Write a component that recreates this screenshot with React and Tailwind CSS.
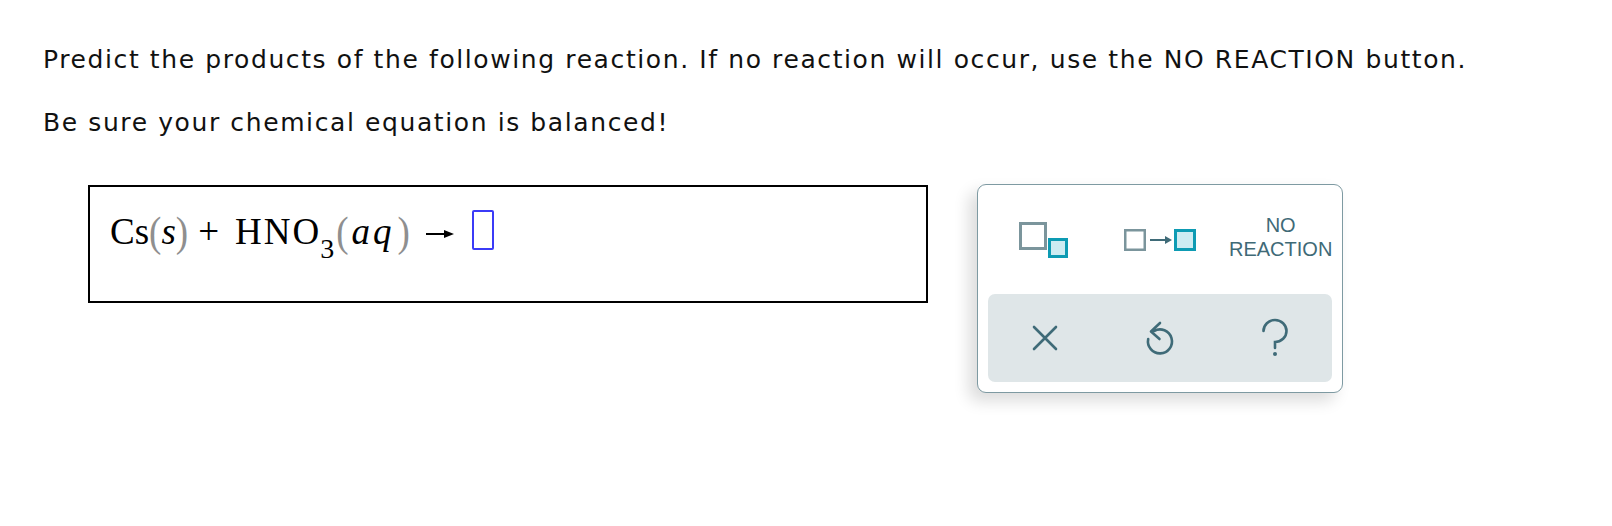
export default function App() {
  const iconColor = "#3f6b78";
  const paren = "inline-block scale-y-[1.15] text-[#8f8f8f]";
  return (
    <div className="min-h-[526px] bg-white pl-[43px] pt-[42px] font-['DejaVu_Sans',sans-serif] text-[25px] leading-[36px] tracking-[1.6px] text-[#111]">
      <p>Predict the products of the following reaction. If no reaction will occur, use the NO REACTION button.</p>
      <p className="mt-[27px]">Be sure your chemical equation is balanced!</p>
      <div className="mt-[44px] ml-[45px] flex items-start tracking-normal">
        <div className="h-[118px] w-[840px] border-2 border-black pl-[20px] pt-[23px]">
          <div className="flex items-start font-['Liberation_Serif',serif] text-[37px] text-black">
            <span className="mt-[4px] whitespace-nowrap leading-[36px]">
              Cs<span className={paren}>(</span><i>s</i><span className={paren}>)</span>
              <span className="ml-[10px] mr-[16px]">+</span>
              H<span className="ml-[2px]">N</span><span className="ml-[2px]">O</span><span className="ml-[1px] align-[-14px] text-[28px]">3</span><span className={`ml-[2px] ${paren}`}>(</span><i className="ml-[3px] tracking-[3px]">aq</i><span className={`ml-[3px] ${paren}`}>)</span>
            </span>
            <svg className="ml-[16px] mt-[19px]" width="28" height="10" viewBox="0 0 28 10">
              <line x1="0" y1="5" x2="20" y2="5" stroke="#000" strokeWidth="2" />
              <polygon points="18,1 28,5 18,9" fill="#000" />
            </svg>
            <div className="ml-[18px] h-[40px] w-[22px] rounded-[2px] border-2 border-[#3b3bf7]" />
          </div>
        </div>
        <div className="-mt-px ml-[49px] flex h-[209px] w-[366px] flex-col rounded-[9px] border-[1.5px] border-[#7e9aa2] bg-white px-[10px] shadow-[-8px_8px_16px_rgba(0,0,0,0.14)]">
          <div className="grid h-[109px] grid-cols-3 items-center">
            <div className="flex justify-center">
              <svg width="52" height="38" viewBox="0 0 52 38" className="-ml-[3px]">
                <rect x="2.5" y="2.5" width="25" height="25" fill="none" stroke="#7b959c" strokeWidth="3" />
                <rect x="31.5" y="18.5" width="17" height="17" fill="#cdecf2" stroke="#0d9bb3" strokeWidth="3" />
              </svg>
            </div>
            <div className="flex justify-center">
              <svg width="74" height="24" viewBox="0 0 74 24">
                <rect x="2.25" y="2.25" width="19.5" height="19.5" fill="none" stroke="#7b959c" strokeWidth="2.5" />
                <line x1="27" y1="12" x2="44" y2="12" stroke={iconColor} strokeWidth="2" />
                <polygon points="42,8 49,12 42,16" fill={iconColor} />
                <rect x="52.5" y="2.5" width="19" height="19" fill="#cdecf2" stroke="#0d9bb3" strokeWidth="3" />
              </svg>
            </div>
            <div className="-mt-[5px] flex flex-col items-center pl-[12px] font-['Liberation_Sans',sans-serif] text-[20px] leading-[24px] text-[#3f6a77]">
              <span>NO</span>
              <span>REACTION</span>
            </div>
          </div>
          <div className="grid h-[88px] grid-cols-3 items-center rounded-[7px] bg-[#dfe6e8]">
            <div className="flex justify-center">
              <svg width="26" height="26" viewBox="0 0 26 26">
                <path d="M2 2 L24 24 M24 2 L2 24" stroke={iconColor} strokeWidth="2.6" strokeLinecap="round" />
              </svg>
            </div>
            <div className="flex justify-center">
              <svg width="32" height="36" viewBox="0 0 32 36" fill="none">
                <path d="M10 11 A12 12 0 1 1 4.2 19" stroke={iconColor} strokeWidth="2.6" strokeLinecap="round" />
                <path d="M16 3 L7 11.5 L15.5 19" stroke={iconColor} strokeWidth="2.6" strokeLinecap="round" strokeLinejoin="round" />
              </svg>
            </div>
            <div className="flex justify-center">
              <svg width="28" height="40" viewBox="0 0 28 40" fill="none">
                <path d="M2.5 13 A11.5 11 0 1 1 14 24 L14 30" stroke={iconColor} strokeWidth="2.6" strokeLinecap="round" />
                <circle cx="14" cy="36" r="2" fill={iconColor} />
              </svg>
            </div>
          </div>
        </div>
      </div>
    </div>
  );
}
